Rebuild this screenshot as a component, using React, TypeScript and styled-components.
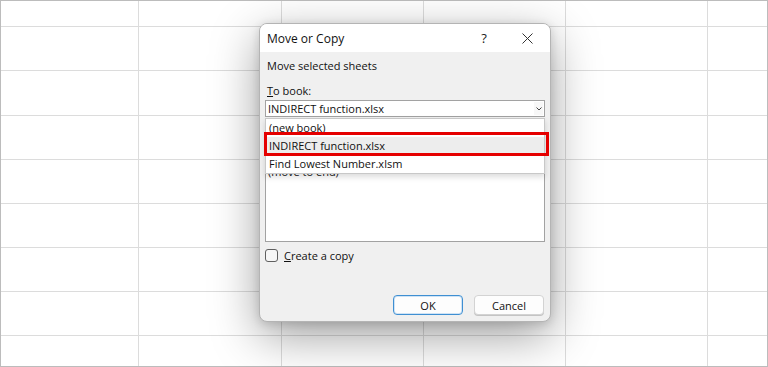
import React from "react";
import styled, { createGlobalStyle } from "styled-components";

const GlobalStyle = createGlobalStyle`
  html, body { margin: 0; padding: 0; background: #ffffff; }
  body { overflow: hidden; font-family: "Open Sans", "Noto Sans", sans-serif; }
  * { box-sizing: border-box; }
`;

const Stage = styled.div`
  position: relative;
  width: 768px;
  height: 367px;
  overflow: hidden;
  background: #ffffff;
`;

const Sheet = styled.div`
  display: grid;
  width: 768px;
  height: 367px;
  border: 1px solid #bcbcbc;
  grid-template-columns: 138px 143px 142px 142px 142px 1fr;
  grid-template-rows: 26px 44px 45px 44px 44px 44px 44px 44px 1fr;
`;

const Cell = styled.div<{ $lastCol: boolean; $lastRow: boolean }>`
  border-right: ${(p) => (p.$lastCol ? "none" : "1px solid #dcdcdc")};
  border-bottom: ${(p) => (p.$lastRow ? "none" : "1px solid #dcdcdc")};
`;

const Dialog = styled.div`
  position: absolute;
  left: 259px;
  top: 23px;
  width: 292px;
  height: 299px;
  border: 1px solid #b4b4b4;
  border-radius: 8px;
  background: #f0f0f0;
  box-shadow: 0 14px 48px rgba(0, 0, 0, 0.38), 0 2px 10px rgba(0, 0, 0, 0.14);
  display: flex;
  flex-direction: column;
  overflow: hidden;
  color: #111111;
  font-size: 11px;
`;

const TitleBar = styled.div`
  height: 28px;
  background: #ffffff;
  display: flex;
  align-items: center;
  padding-left: 7px;
`;

const Title = styled.div`
  flex: 1;
  font-size: 12px;
  color: #111111;
`;

const TitleButton = styled.div<{ $w: number }>`
  width: ${(p) => p.$w}px;
  height: 28px;
  display: flex;
  align-items: center;
  justify-content: center;
  font-size: 13px;
  color: #222;
`;

const Body = styled.div`
  flex: 1;
  display: flex;
  flex-direction: column;
  padding: 0 5px;
`;

const Label = styled.div<{ $mt: number }>`
  margin-top: ${(p) => p.$mt}px;
  height: 16px;
  line-height: 16px;
  padding-left: 2px;
  white-space: nowrap;
`;

const Combo = styled.div`
  margin-top: 1px;
  height: 17px;
  background: #ffffff;
  border: 1px solid #a2a2a2;
  display: flex;
  align-items: center;
`;

const ComboText = styled.div`
  flex: 1;
  padding-left: 2px;
  line-height: 15px;
  white-space: nowrap;
`;

const ComboArrow = styled.div`
  width: 9px;
  height: 13px;
  margin-right: 1px;
  display: flex;
  align-items: center;
  justify-content: center;
  background: #f7f7f7;
`;

const ListBox = styled.div`
  margin-top: 45px;
  height: 80px;
  background: #ffffff;
  border: 1px solid #a2a2a2;
  padding-top: 1px;
`;

const ListItem = styled.div`
  height: 16px;
  line-height: 16px;
  padding-left: 2px;
  white-space: nowrap;
`;

const CheckRow = styled.label`
  margin-top: 7px;
  height: 13px;
  display: flex;
  align-items: center;
  gap: 6px;
`;

const CheckBox = styled.span`
  width: 13px;
  height: 13px;
  border: 1px solid #5f5f5f;
  border-radius: 3px;
  background: #f6f6f6;
`;

const Spacer = styled.div`
  flex: 1;
`;

const ButtonRow = styled.div`
  display: flex;
  justify-content: flex-end;
  gap: 11px;
  padding-right: 1px;
  margin-bottom: 6px;
`;

const Button = styled.button<{ $default?: boolean }>`
  width: 70px;
  height: 20px;
  padding: 0;
  font-family: inherit;
  font-size: 11px;
  color: #111111;
  background: #fdfdfd;
  border: 1px solid ${(p) => (p.$default ? "#3f8fd2" : "#d3d3d3")};
  border-radius: 4px;
  box-shadow: ${(p) => (p.$default ? "inset 0 0 0 1px #cfe3f5" : "0 1px 0 #c4c4c4")};
`;

const DropList = styled.div`
  position: absolute;
  left: 5px;
  top: 94px;
  width: 280px;
  background: #ffffff;
  border: 1px solid #c8c8c8;
  box-shadow: 0 3px 6px rgba(0, 0, 0, 0.14);
`;

const DropItem = styled.div<{ $hover?: boolean }>`
  height: 18px;
  line-height: 18px;
  padding-left: 3px;
  white-space: nowrap;
  background: ${(p) => (p.$hover ? "#ededed" : "transparent")};
`;

const Highlight = styled.div`
  position: absolute;
  left: 4px;
  top: 108px;
  width: 285px;
  height: 24px;
  border: 3px solid #e50000;
`;

const cols = 6;
const rows = 9;

export default function App() {
  const cells = [];
  for (let r = 0; r < rows; r++) {
    for (let c = 0; c < cols; c++) {
      cells.push(<Cell key={`${r}-${c}`} $lastCol={c === cols - 1} $lastRow={r === rows - 1} />);
    }
  }
  return (
    <Stage>
      <GlobalStyle />
      <Sheet>{cells}</Sheet>
      <Dialog>
        <TitleBar>
          <Title>Move or Copy</Title>
          <TitleButton $w={40}>?</TitleButton>
          <TitleButton $w={46}>
            <svg width="11" height="11" viewBox="0 0 11 11">
              <path d="M0.5 0.5 L10.5 10.5 M10.5 0.5 L0.5 10.5" stroke="#333" strokeWidth="1" fill="none" />
            </svg>
          </TitleButton>
        </TitleBar>
        <Body>
          <Label $mt={6}>Move selected sheets</Label>
          <Label $mt={9}>
            <u>T</u>o book:
          </Label>
          <Combo>
            <ComboText>INDIRECT function.xlsx</ComboText>
            <ComboArrow>
              <svg width="6" height="4" viewBox="0 0 6 4">
                <path d="M0.5 0.5 L3 3 L5.5 0.5" stroke="#444" strokeWidth="1" fill="none" />
              </svg>
            </ComboArrow>
          </Combo>
          <ListBox>
            <ListItem>(move to end)</ListItem>
          </ListBox>
          <CheckRow>
            <CheckBox />
            <span>
              <u>C</u>reate a copy
            </span>
          </CheckRow>
          <Spacer />
          <ButtonRow>
            <Button $default>OK</Button>
            <Button>Cancel</Button>
          </ButtonRow>
        </Body>
        <DropList>
          <DropItem>(new book)</DropItem>
          <DropItem $hover>INDIRECT function.xlsx</DropItem>
          <DropItem>Find Lowest Number.xlsm</DropItem>
        </DropList>
        <Highlight />
      </Dialog>
    </Stage>
  );
}
